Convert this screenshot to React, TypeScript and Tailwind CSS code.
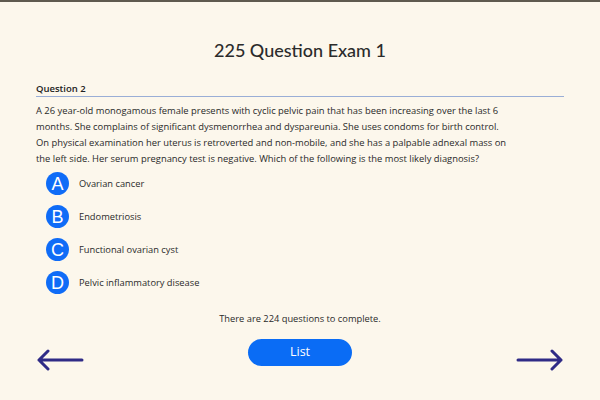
import React from 'react';

type Choice = { letter: string; text: string };

const choices: Choice[] = [
  { letter: 'A', text: 'Ovarian cancer' },
  { letter: 'B', text: 'Endometriosis' },
  { letter: 'C', text: 'Functional ovarian cyst' },
  { letter: 'D', text: 'Pelvic inflammatory disease' },
];

const Arrow = ({ dir }: { dir: 'left' | 'right' }) => (
  <svg width="48" height="22" viewBox="0 0 48 22" fill="none" aria-hidden="true">
    {dir === 'left' ? (
      <path d="M46 11H3M12 2L3 11l9 9" stroke="#2f2b86" strokeWidth="3" strokeLinecap="round" strokeLinejoin="round" />
    ) : (
      <path d="M2 11h43M36 2l9 9-9 9" stroke="#2f2b86" strokeWidth="3" strokeLinecap="round" strokeLinejoin="round" />
    )}
  </svg>
);

export default function App() {
  return (
    <div className="w-[600px] h-[400px] bg-[#fcf7ec] border-t-2 border-[#5f5a4f] flex flex-col text-[#222] font-['Open_Sans',sans-serif]">
      <h1 className="text-center text-[18px] font-medium text-[#2b2b2b] mt-[36px] leading-[24px] font-['Lato',sans-serif]">
        225 Question Exam 1
      </h1>

      <div className="mx-[36px] mt-[20px] border-b border-[#9aaed6]">
        <div className="text-[9.5px] font-semibold leading-[14px]">Question 2</div>
      </div>

      <p className="mx-[36px] mt-[6px] max-w-[472px] text-[9.4px] leading-[16px] text-[#2a2a2a]">
        A 26 year-old monogamous female presents with cyclic pelvic pain that has been increasing over the last 6
        months. She complains of significant dysmenorrhea and dyspareunia. She uses condoms for birth control. On
        physical examination her uterus is retroverted and non-mobile, and she has a palpable adnexal mass on the left
        side. Her serum pregnancy test is negative. Which of the following is the most likely diagnosis?
      </p>

      <div className="ml-[46px] mt-[5px] flex flex-col gap-[10px]">
        {choices.map((c) => (
          <div key={c.letter} className="flex items-center gap-[10px]">
            <span className="w-[23px] h-[23px] rounded-full bg-[#0f6cf7] text-white flex items-center justify-center text-[18px] leading-none font-['Liberation_Sans',sans-serif]">
              {c.letter}
            </span>
            <span className="text-[9.3px] text-[#2a2a2a]">{c.text}</span>
          </div>
        ))}
      </div>

      <div className="text-center text-[9.3px] mt-[18px] leading-[14px] text-[#2a2a2a]">
        There are 224 questions to complete.
      </div>

      <div className="mx-[36px] mt-[13px] flex items-start justify-between">
        <div className="mt-[10px]">
          <Arrow dir="left" />
        </div>
        <button className="w-[104px] h-[27px] rounded-full bg-[#0a6cf5] text-white text-[12.5px] font-medium">
          List
        </button>
        <div className="mt-[10px]">
          <Arrow dir="right" />
        </div>
      </div>
    </div>
  );
}
